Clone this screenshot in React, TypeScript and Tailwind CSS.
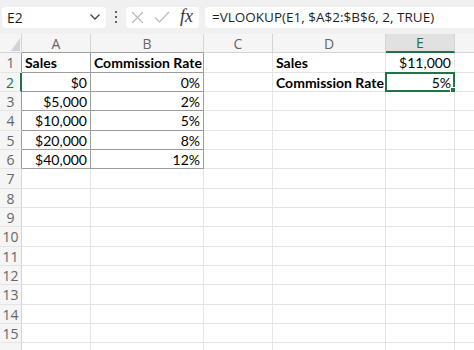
import React from 'react';

type Cell = { v: string; bold?: boolean; right?: boolean };

// spreadsheet content, keyed by row then column letter
const DATA: Record<number, Record<string, Cell>> = {
  1: {
    A: { v: 'Sales', bold: true },
    B: { v: 'Commission Rate', bold: true },
    D: { v: 'Sales', bold: true },
    E: { v: '$11,000', right: true },
  },
  2: {
    A: { v: '$0', right: true },
    B: { v: '0%', right: true },
    D: { v: 'Commission Rate', bold: true },
    E: { v: '5%', right: true },
  },
  3: { A: { v: '$5,000', right: true }, B: { v: '2%', right: true } },
  4: { A: { v: '$10,000', right: true }, B: { v: '5%', right: true } },
  5: { A: { v: '$20,000', right: true }, B: { v: '8%', right: true } },
  6: { A: { v: '$40,000', right: true }, B: { v: '12%', right: true } },
};

const COLS = ['A', 'B', 'C', 'D', 'E', 'F'];
const HEIGHTS = [20, 19, 19];

const inTable = (r: number, c: string) => r >= 1 && r <= 6 && (c === 'A' || c === 'B');

const Toolbar = () => (
  <div className="h-[34px] bg-[#f0f0f0] flex items-center pl-[2px] font-['Open_Sans',sans-serif] text-[14px] text-[#1f1f1f]">
    {/* Name box */}
    <div className="w-[104px] h-[21px] bg-white rounded-[4px] flex items-center justify-between pl-[5px] pr-[5px]">
      <span>E2</span>
      <svg width="12" height="8" viewBox="0 0 12 8" fill="none">
        <path d="M1.5 1.5 L6 6 L10.5 1.5" stroke="#444" strokeWidth="1.3" />
      </svg>
    </div>
    {/* Grip dots */}
    <div className="w-[20px] flex flex-col items-center gap-[2.5px]">
      <span className="w-[2.5px] h-[2.5px] rounded-full bg-[#333]" />
      <span className="w-[2.5px] h-[2.5px] rounded-full bg-[#333]" />
      <span className="w-[2.5px] h-[2.5px] rounded-full bg-[#333]" />
    </div>
    {/* Cancel / enter / function */}
    <div className="w-[73px] h-[21px] bg-white rounded-[4px] flex items-center pl-[5px]">
      <svg width="13" height="13" viewBox="0 0 13 13" fill="none">
        <path d="M1 1 L12 12 M12 1 L1 12" stroke="#b9b9b9" strokeWidth="1.1" />
      </svg>
      <svg width="16" height="12" viewBox="0 0 16 12" fill="none" className="ml-[10px]">
        <path d="M1 6.5 L5.5 11 L15 1" stroke="#b9b9b9" strokeWidth="1.1" />
      </svg>
      <span className="ml-[10px] font-['Liberation_Serif',serif] italic text-[18px] leading-none text-[#333] -mt-[2px]">fx</span>
    </div>
    {/* Formula */}
    <div className="flex-1 ml-[6px] h-[21px] bg-white rounded-l-[4px] flex items-center pl-[7px] whitespace-nowrap overflow-hidden text-[13.5px]">
      =VLOOKUP(E1, $A$2:$B$6, 2, TRUE)
    </div>
  </div>
);

const GRID = 'grid grid-cols-[22px_69px_113px_69px_113px_69px_19px] grid-rows-[100%] leading-[17px]';

const HeaderRow = () => (
  <div className={`${GRID} h-[19px] bg-[#f5f5f5] font-['Open_Sans',sans-serif] text-[14px] text-[#666]`}>
    <div className="relative border-r border-b border-[#d4d4d4]">
      <svg width="9" height="13" viewBox="0 0 9 13" className="absolute right-[1px] bottom-[1px]">
        <path d="M9 0 L9 13 L0 13 Z" fill="#d2d2d2" />
      </svg>
    </div>
    {COLS.map((c) => {
      const sel = c === 'E';
      return (
        <div
          key={c}
          className={`flex items-center justify-center border-[#d4d4d4] ${c === 'F' ? '' : 'border-r'} ${
            sel ? 'bg-[#e1e1e1] text-[#217346] border-b-2 border-b-[#217346]' : 'border-b'
          } ${c === 'A' || c === 'B' ? 'border-b-[#9c9c9c]' : ''}`}
        >
          {c === 'F' ? '' : c}
        </div>
      );
    })}
  </div>
);

const Row = ({ r }: { r: number }) => {
  const h = r > 15 ? 10 : HEIGHTS[(r - 1) % 3];
  const selRow = r === 2;
  return (
    <div className={GRID} style={{ height: h }}>
      <div
        className={`flex items-center justify-center border-b border-[#e4e4e4] bg-[#f5f5f5] font-['Open_Sans',sans-serif] text-[14px] ${
          selRow ? 'bg-[#e1e1e1] text-[#217346] border-r-2 border-r-[#217346]' : 'text-[#666] border-r'
        } ${!selRow && r <= 6 ? 'border-r-[#9c9c9c]' : !selRow ? 'border-r-[#d4d4d4]' : ''}`}
      >
        {r <= 15 ? r : ''}
      </div>
      {COLS.map((c) => {
        const cell = DATA[r]?.[c];
        const t = inTable(r, c);
        const sel = r === 2 && c === 'E';
        return (
          <div
            key={c}
            className={`relative flex items-center px-[3px] whitespace-nowrap text-[14px] text-black border-b ${
              c === 'F' ? '' : 'border-r'
            } ${t ? 'border-[#9c9c9c]' : 'border-[#e4e4e4]'} ${cell?.right ? 'justify-end' : 'justify-start'} ${
              cell?.bold ? 'font-bold' : ''
            }`}
          >
            {cell?.v}
            {sel && (
              <div className="absolute left-[-1px] top-[-1px] right-[-1px] bottom-[-1px] border-2 border-[#217346]">
                <span className="absolute right-[-3px] bottom-[-3px] w-[4px] h-[4px] bg-[#217346] border border-white box-content" />
              </div>
            )}
          </div>
        );
      })}
    </div>
  );
};

export default function App() {
  const rows = Array.from({ length: 16 }, (_, i) => i + 1);
  return (
    <div className="w-[474px] h-[350px] overflow-hidden bg-white font-['Lato',sans-serif]">
      <Toolbar />
      <HeaderRow />
      {rows.map((r) => (
        <Row key={r} r={r} />
      ))}
    </div>
  );
}
